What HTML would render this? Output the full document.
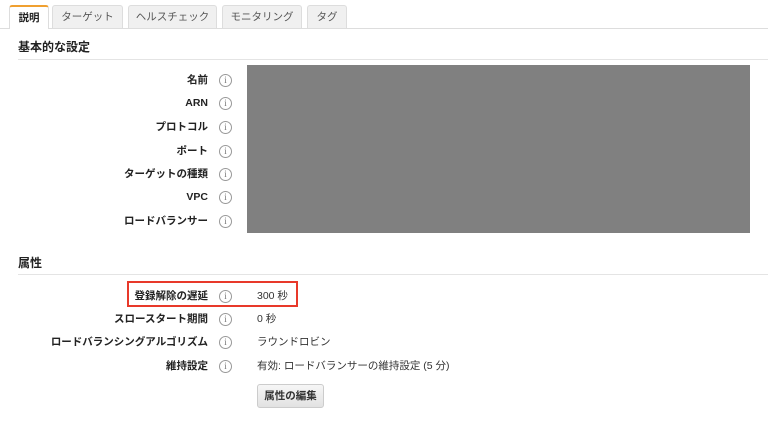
<!DOCTYPE html>
<html><head><meta charset="utf-8"><style>
body{margin:0;width:768px;height:428px;background:#fff;font-family:"Liberation Sans","Noto Sans CJK JP",sans-serif;color:#333;position:relative;overflow:hidden}
.a{position:absolute;white-space:nowrap}
.tab{position:absolute;top:5px;height:23px;background:#f0f0f0;border:1px solid #ddd;border-bottom:none;border-radius:3px 3px 0 0;font-size:10.5px;color:#555;text-align:center;line-height:23px;box-sizing:border-box}
.tab.act{background:#fff;border-top:2px solid #f0a030;color:#222;font-weight:bold;height:24px}
.h{font-size:12px;font-weight:bold;color:#222;line-height:14px}
.ln{position:absolute;height:1px;background:#e4e4e4;left:18px;right:0}
.lb{position:absolute;right:560px;font-size:10.5px;line-height:13px;font-weight:bold;color:#222;white-space:nowrap}
.i{position:absolute;left:219px;width:11px;height:11px;border:1px solid #999;border-radius:50%;font-size:9px;line-height:11px;text-align:center;color:#777;font-family:"Liberation Serif",serif}
.v{position:absolute;left:257px;font-size:10.5px;line-height:13px;color:#333;white-space:nowrap}
</style></head><body>
<div class="a" style="left:0;right:0;top:28px;height:1px;background:#ddd"></div>
<div class="tab act" style="left:9px;width:40px">説明</div>
<div class="tab" style="left:52px;width:71px">ターゲット</div>
<div class="tab" style="left:128px;width:89px">ヘルスチェック</div>
<div class="tab" style="left:222px;width:80px">モニタリング</div>
<div class="tab" style="left:307px;width:40px">タグ</div>
<div class="a h" style="left:18px;top:40px">基本的な設定</div>
<div class="ln" style="top:59px"></div>
<div class="a" style="left:247px;top:65px;width:503px;height:168px;background:#808080"></div>
<div class="lb" style="top:74px">名前</div><div class="i" style="top:74px">i</div>
<div class="lb" style="top:97px">ARN</div><div class="i" style="top:97px">i</div>
<div class="lb" style="top:121px">プロトコル</div><div class="i" style="top:121px">i</div>
<div class="lb" style="top:145px">ポート</div><div class="i" style="top:145px">i</div>
<div class="lb" style="top:168px">ターゲットの種類</div><div class="i" style="top:168px">i</div>
<div class="lb" style="top:191px">VPC</div><div class="i" style="top:191px">i</div>
<div class="lb" style="top:215px">ロードバランサー</div><div class="i" style="top:215px">i</div>
<div class="a h" style="left:18px;top:256px">属性</div>
<div class="ln" style="top:274px"></div>
<div class="a" style="left:127px;top:281px;width:171px;height:26px;border:2px solid #e8392a;box-sizing:border-box"></div>
<div class="lb" style="top:290px">登録解除の遅延</div><div class="i" style="top:290px">i</div><div class="v" style="top:290px">300 秒</div>
<div class="lb" style="top:313px">スロースタート期間</div><div class="i" style="top:313px">i</div><div class="v" style="top:313px">0 秒</div>
<div class="lb" style="top:336px">ロードバランシングアルゴリズム</div><div class="i" style="top:336px">i</div><div class="v" style="top:336px">ラウンドロビン</div>
<div class="lb" style="top:360px">維持設定</div><div class="i" style="top:360px">i</div><div class="v" style="top:360px">有効: ロードバランサーの維持設定 (5 分)</div>
<div class="a" style="left:257px;top:384px;width:67px;height:24px;background:linear-gradient(#f6f6f6,#e2e2e2);border:1px solid #ccc;border-radius:3px;box-sizing:border-box;font-size:10.5px;font-weight:bold;color:#333;text-align:center;line-height:22px">属性の編集</div>
</body></html>
